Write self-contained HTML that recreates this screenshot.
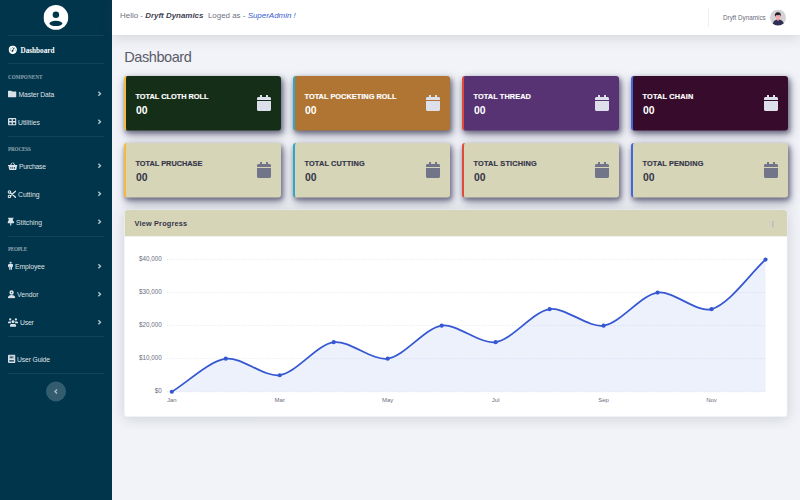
<!DOCTYPE html>
<html lang="en"><head><meta charset="utf-8"><title>Dashboard</title>
<style>
*{box-sizing:border-box}
html,body{margin:0;padding:0;width:800px;height:500px;overflow:hidden;background:#f1f3f8}
body{font-family:"Liberation Sans",sans-serif;color:#858796}
#w{width:1600px;height:1000px;transform:scale(.5);transform-origin:0 0;position:relative;overflow:hidden;background:#f1f3f8;font-size:16px;line-height:1.5}
/* sidebar */
#sb{position:absolute;left:0;top:0;width:224px;height:1000px;background:#00354c}
.brand{height:70px;position:relative}
.brand svg{position:absolute;left:88px;top:11px}
.dv{border-top:1px solid rgba(255,255,255,.15);margin:0 16px 16px 16px}
.dv.m0{margin-bottom:0}
.ni{height:56px;padding:16px;position:relative;color:rgba(255,255,255,.88);font-size:13.600px;line-height:24px;white-space:nowrap}
.ni svg{position:absolute;left:16px;top:19px;fill:#d9e0e6}
.ni span{position:absolute;top:17.400px}
.ni .ar{position:absolute;right:21px;left:auto;top:21px;fill:none;stroke:rgba(255,255,255,.7);stroke-width:2.800}
.ni.act{color:#fff}
.ni.act span{font-family:"Liberation Serif",serif;font-weight:bold;font-size:14.4px}
.hd{padding:0 16px;font-family:"Liberation Serif",serif;font-weight:bold;font-size:10.400px;line-height:15.600px;height:15.600px;color:rgba(255,255,255,.55);position:relative;top:1.600px}
.tg{width:40px;height:40px;border-radius:50%;background:rgba(255,255,255,.2);margin:0 auto;position:relative}
.tg svg{position:absolute;left:14px;top:12px;fill:none;stroke:rgba(255,255,255,.6);stroke-width:2.600}
/* topbar */
#tb{position:absolute;left:224px;top:0;width:1376px;height:70px;background:#fff;box-shadow:0 2.400px 28px 0 rgba(58,59,69,.2)}
.hello{position:absolute;left:16px;top:19px;font-size:15.9px;line-height:24px;color:#70727f;white-space:nowrap}
.hello b{font-style:italic;color:#3f4150}
.hello i{color:#3b5cd0}
.tdv{position:absolute;left:1192px;top:16px;width:0;height:38px;border-right:1.500px solid #d9dce9}
.uname{position:absolute;left:1222px;top:23px;font-size:12.6px;line-height:24px;color:#6a6c7a;white-space:nowrap}
.av{position:absolute;left:1316px;top:19px}
/* content */
h1{position:absolute;left:248.500px;top:96px;margin:0;font-size:29px;line-height:34px;font-weight:normal;color:#5a5c69;letter-spacing:-.85px}
.c{position:absolute;width:314px;height:109px;border-radius:6px;border-left:4px solid #f6c23e;box-shadow:3px 5px 8px rgba(58,55,88,.5),4px 9px 19px rgba(58,55,88,.5)}
.c .t{position:absolute;left:19px;top:28px;font-size:14.700px;line-height:24px;font-weight:bold;white-space:nowrap;-webkit-text-stroke:.35px currentColor}
.c .n{position:absolute;left:20px;top:56px;font-size:20px;line-height:24px;font-weight:bold;transform:scaleX(1.04);transform-origin:0 0}
.c svg{position:absolute;right:20px;top:38px}
.d1{color:#fff}.d1 svg{fill:#dddfeb}
.d2{color:#35364a;background:#d6d5b7}.d2 svg{fill:#72748a}
/* chart card */
#cc{position:absolute;left:248px;top:419px;width:1327px;height:415px;clip-path:inset(-80px -80px -24px -80px);background:#fff;border:1px solid #e3e6f0;border-radius:6px;box-shadow:0 2.4px 28px 0 rgba(58,59,69,.18);overflow:hidden}
#cc .h{height:53px;border-radius:5px 5px 0 0;background:#d6d5b7;border-bottom:1px solid #e3e6f0;position:relative}
#cc .h span{position:absolute;left:20px;top:14px;font-size:14.7px;line-height:24px;font-weight:bold;color:#35364a;letter-spacing:.36px}
#cc .h i{position:absolute;right:27px;top:21.500px;width:3.400px;height:3.400px;background:#b0b1c4;box-shadow:0 4.600px 0 #b0b1c4,0 9.200px 0 #b0b1c4}
.chart{position:absolute;left:0;top:0}
.tk{font-family:"Liberation Sans",sans-serif;font-size:12px;fill:#6b6d7e}.ty{font-size:12.600px}
</style></head><body>
<div id="w">
<div id="sb">
  <div class="brand"><svg width="49.600" height="49.600" viewBox="0 0 49.600 49.600" style="left:87.200px;top:10.300px"><circle cx="24.800" cy="24.800" r="24.800" fill="#fff"/><circle cx="24.800" cy="19.400" r="6.500" fill="#00354c"/><path d="M11.600 36.800Q14.500 31.300 24.800 31.300T38 36.800Q35.100 42.200 24.800 42.200T11.600 36.800z" fill="#00354c"/></svg></div>
  <div class="dv m0"></div>
  <div class="ni act"><svg width="17" height="17" viewBox="0 0 17 17" style="top:19.600px;left:17.400px"><circle cx="8.500" cy="8.500" r="8.300" fill="#fff"/><circle cx="8" cy="10.800" r="1.900" fill="#00354c"/><path d="M8 10.800L10.700 4.800" stroke="#00354c" stroke-width="1.700" stroke-linecap="round"/><circle cx="3.700" cy="9" r=".85" fill="#00354c"/><circle cx="4.900" cy="5.500" r=".85" fill="#00354c"/><circle cx="7.800" cy="3.600" r=".85" fill="#00354c"/><circle cx="13.300" cy="9" r=".85" fill="#00354c"/><circle cx="12.600" cy="5.700" r=".7" fill="#00354c"/></svg><span style="left:41px">Dashboard</span></div>
  <div class="dv"></div>
  <div class="hd">COMPONENT</div>
  <div class="ni"><svg width="17" height="14" viewBox="0 0 17 14" style="top:21px"><path d="M1.6 0h4.6l2 2h7.2c.9 0 1.6.7 1.6 1.6v8.8c0 .9-.7 1.6-1.6 1.6H1.6C.7 14 0 13.300 0 12.400V1.600C0 .7.7 0 1.600 0z"/></svg><span style="left:37px;letter-spacing:-0.24px">Master Data</span><svg class="ar" width="8" height="13" viewBox="0 0 8 13"><path d="M1.700 2.300l4.400 4.200-4.400 4.200"/></svg></div>
  <div class="ni"><svg width="17" height="15" viewBox="0 0 17 15" style="top:20px;left:15.600px"><path fill-rule="evenodd" d="M2.600 0h11.800C15.800 0 17 1.200 17 2.600v9.800c0 1.400-1.200 2.600-2.600 2.600H2.600C1.200 15 0 13.800 0 12.400V2.600C0 1.200 1.200 0 2.600 0zM2.700 2.700v3.500h4.500V2.700zm7.100 0v3.500h4.500V2.700zM2.700 8.800v3.500h4.500V8.800zm7.100 0v3.500h4.500V8.800z"/></svg><span style="left:36px">Utilities</span><svg class="ar" width="8" height="13" viewBox="0 0 8 13"><path d="M1.700 2.300l4.400 4.200-4.400 4.200"/></svg></div>
  <div class="dv"></div>
  <div class="hd" style="letter-spacing:-.35px">PROCESS</div>
  <div class="ni"><svg width="19" height="16" viewBox="0 0 19 16" style="top:20px"><path d="M0 6h19v2h-1l-1.200 7c-.1.600-.600 1-1.200 1H3.400c-.6 0-1.100-.4-1.200-1L1 8H0zM5 10v3.500h1.500V10zm3.800 0v3.500h1.500V10zm3.700 0v3.500H14V10z"/><path d="M4 6.500L8 .8l1.400.9L6 6.500zm11 0L11 .8l-1.400.9 3.400 4.800z"/></svg><span style="left:38px;letter-spacing:-0.5px">Purchase</span><svg class="ar" width="8" height="13" viewBox="0 0 8 13"><path d="M1.700 2.300l4.400 4.200-4.400 4.200"/></svg></div>
  <div class="ni"><svg width="17" height="17" viewBox="0 0 17 17" style="top:19.600px;left:15.400px"><g fill="none" stroke="#dfe5ea" stroke-width="2.300"><circle cx="3.800" cy="4" r="2.500"/><circle cx="3.800" cy="13" r="2.500"/><path d="M5.800 5.600L16 14.600M5.800 11.400L16 2.400" stroke-width="2.700" stroke-linecap="round"/></g></svg><span style="left:36px">Cutting</span><svg class="ar" width="8" height="13" viewBox="0 0 8 13"><path d="M1.700 2.300l4.400 4.200-4.400 4.200"/></svg></div>
  <div class="ni"><svg width="13" height="17" viewBox="0 0 13 17" style="top:19px;left:15.400px"><path d="M1.600 0h9.800c.5 0 .9.400.9.900v.6c0 .5-.4.900-.9.900h-.9l.5 4c1.500.9 2.200 2.400 2.200 4.200 0 .5-.4.900-.9.900H7.600v3.600L6.500 17l-1.100-1.900v-3.600H.7c-.5 0-.9-.4-.9-.9 0-1.800.7-3.300 2.200-4.200l.5-4h-.9c-.5 0-.9-.4-.9-.9V.9c0-.5.400-.9.900-.9z"/></svg><span style="left:32px">Stitching</span><svg class="ar" width="8" height="13" viewBox="0 0 8 13"><path d="M1.700 2.300l4.400 4.200-4.400 4.200"/></svg></div>
  <div class="dv"></div>
  <div class="hd" style="letter-spacing:-.67px">PEOPLE</div>
  <div class="ni"><svg width="10.400" height="16.400" viewBox="0 0 10 16" preserveAspectRatio="none" style="top:18.600px;left:15.600px"><circle cx="5" cy="1.900" r="1.900"/><path d="M3.200 4.300h3.600C8.600 4.300 10 5.700 10 7.500v2.700c0 .5-.4.900-.9.900H8.200V8.600h-.5V16H5.400v-5.200h-.8V16H2.300V8.600h-.5v2.500H.9c-.5 0-.9-.4-.9-.9V7.500c0-1.800 1.400-3.200 3.200-3.200z"/></svg><span style="left:30px;letter-spacing:-0.15px">Employee</span><svg class="ar" width="8" height="13" viewBox="0 0 8 13"><path d="M1.700 2.300l4.400 4.200-4.400 4.200"/></svg></div>
  <div class="ni"><svg width="15" height="17" viewBox="0 0 15 17" style="top:19px;left:15.600px"><path fill-rule="evenodd" d="M7.200.6a4.400 4.400 0 1 0 0 8.800a4.400 4.400 0 1 0 0-8.800zM7.200 3.800a1.100 1.100 0 1 1 0 2.200a1.100 1.100 0 1 1 0-2.200z"/><path d="M0 16.400c0-.9 0-1.500.2-2.300.6-2.600 3.400-4 7-4s6.400 1.400 7 4c.2.800.2 1.400.2 2.300z"/></svg><span style="left:34px">Vendor</span><svg class="ar" width="8" height="13" viewBox="0 0 8 13"><path d="M1.700 2.300l4.400 4.200-4.400 4.200"/></svg></div>
  <div class="ni"><svg width="20" height="18" viewBox="0 0 20 18" style="top:19.200px;left:15.600px"><circle cx="4.400" cy="2.800" r="2.300"/><circle cx="15.800" cy="2.800" r="2.300"/><path d="M2 7.200h3.600c.5 0 .9.100 1.300.3-.9.900-1.200 2-1 3.100H.8c-.4 0-.8-.4-.8-.8V9.200c0-1.100.9-2 2-2zm12.600 0h3.600c1.100 0 2 .9 2 2v.6c0 .4-.4.800-.8.800h-5.100c.2-1.100-.1-2.200-1-3.100.4-.2.800-.3 1.300-.3z"/><circle cx="10.100" cy="7.600" r="2.900"/><path d="M7.200 12h5.800c1.800 0 3.200 1.400 3.200 3.200v1.200c0 .7-.6 1.300-1.300 1.300H5.300c-.7 0-1.300-.6-1.300-1.300v-1.200C4 13.400 5.400 12 7.200 12z"/></svg><span style="left:40px;letter-spacing:-0.4px">User</span><svg class="ar" width="8" height="13" viewBox="0 0 8 13"><path d="M1.700 2.300l4.400 4.200-4.400 4.200"/></svg></div>
  <div class="dv"></div>
  <div class="ni"><svg width="15" height="17" viewBox="0 0 15 17" style="top:19.600px;left:15.600px"><path fill-rule="evenodd" d="M2.600 0h9.800C13.800 0 15 1.200 15 2.600v11.800c0 1.400-1.200 2.600-2.600 2.600H2.600C1.200 17 0 15.800 0 14.400V2.600C0 1.200 1.200 0 2.600 0zM4.200 4.600v1.800h5.200V4.600zM2.600 11.400v2.800h9.200v-2.800z"/><rect x="2.200" y="2.200" width="10.600" height="6.400" fill="#00354c" opacity=".22"/></svg><span style="left:34px;letter-spacing:-0.3px">User Guide</span></div>
  <div class="dv"></div>
  <div class="tg"><svg width="12" height="16" viewBox="0 0 12 16"><path d="M8 4L4 8l4 4"/></svg></div>
</div>
<div id="tb">
  <div class="hello">Hello - <b>Dryft Dynamics</b>&nbsp; Loged as - <i>SuperAdmin !</i></div>
  <div class="tdv"></div>
  <div class="uname">Dryft Dynamics</div>
  <svg class="av" width="32" height="32" viewBox="0 0 32 32"><defs><clipPath id="cp"><circle cx="16" cy="16" r="16"/></clipPath></defs><g clip-path="url(#cp)"><rect width="32" height="32" fill="#d3d3d5"/><path d="M5 33c0-8 4-13 11.300-13S28.500 25 28.500 33z" fill="#2f2e55"/><path d="M13.300 16h5.400v5.200c-1.500 1.600-3.900 1.600-5.400 0z" fill="#f79aa2"/><ellipse cx="15.900" cy="14.200" rx="4.100" ry="5.200" fill="#fba6ac"/><path d="M10.200 13.800c-1.600-4.800 1.300-8.300 5.800-8.300 4 0 6 2.600 5.500 6.200-.2 1.200-.6 2-1.200 2.600.1-1.600-.3-2.800-1.300-3.600-2.200.9-4.800.8-6.700.2-.7.700-1.200 1.700-1.300 3.200z" fill="#1f2029"/></g></svg>
</div>
<h1>Dashboard</h1>
<div class="c d1" style="left:248px;top:152px;background:#152e18;border-left-color:#f6b93b"><div class="t">TOTAL CLOTH ROLL</div><div class="n">00</div><svg width="28" height="32" viewBox="0 0 448 512"><path d="M12 192h424c6.600 0 12 5.400 12 12v260c0 26.500-21.500 48-48 48H48c-26.500 0-48-21.500-48-48V204c0-6.600 5.400-12 12-12zm436-44v-36c0-26.500-21.500-48-48-48h-48V12c0-6.600-5.400-12-12-12h-40c-6.600 0-12 5.400-12 12v52H160V12c0-6.600-5.400-12-12-12h-40c-6.600 0-12 5.400-12 12v52H48C21.500 64 0 85.500 0 112v36c0 6.600 5.400 12 12 12h424c6.600 0 12-5.400 12-12z"/></svg></div>
<div class="c d1" style="left:586px;top:152px;background:#b07433;border-left-color:#2fa8c4"><div class="t" style="letter-spacing:0.07px">TOTAL POCKETING ROLL</div><div class="n">00</div><svg width="28" height="32" viewBox="0 0 448 512"><path d="M12 192h424c6.600 0 12 5.400 12 12v260c0 26.500-21.500 48-48 48H48c-26.500 0-48-21.500-48-48V204c0-6.600 5.400-12 12-12zm436-44v-36c0-26.500-21.500-48-48-48h-48V12c0-6.600-5.400-12-12-12h-40c-6.600 0-12 5.400-12 12v52H160V12c0-6.600-5.400-12-12-12h-40c-6.600 0-12 5.400-12 12v52H48C21.500 64 0 85.500 0 112v36c0 6.600 5.400 12 12 12h424c6.600 0 12-5.400 12-12z"/></svg></div>
<div class="c d1" style="left:924px;top:152px;background:#573373;border-left-color:#e04a3a"><div class="t" style="letter-spacing:0.2px">TOTAL THREAD</div><div class="n">00</div><svg width="28" height="32" viewBox="0 0 448 512"><path d="M12 192h424c6.600 0 12 5.400 12 12v260c0 26.500-21.500 48-48 48H48c-26.500 0-48-21.500-48-48V204c0-6.600 5.400-12 12-12zm436-44v-36c0-26.500-21.500-48-48-48h-48V12c0-6.600-5.400-12-12-12h-40c-6.600 0-12 5.400-12 12v52H160V12c0-6.600-5.400-12-12-12h-40c-6.600 0-12 5.400-12 12v52H48C21.500 64 0 85.500 0 112v36c0 6.600 5.400 12 12 12h424c6.600 0 12-5.400 12-12z"/></svg></div>
<div class="c d1" style="left:1262px;top:152px;background:#360b2b;border-left-color:#4466d8"><div class="t" style="letter-spacing:0.35px">TOTAL CHAIN</div><div class="n">00</div><svg width="28" height="32" viewBox="0 0 448 512"><path d="M12 192h424c6.600 0 12 5.400 12 12v260c0 26.500-21.500 48-48 48H48c-26.500 0-48-21.500-48-48V204c0-6.600 5.400-12 12-12zm436-44v-36c0-26.500-21.500-48-48-48h-48V12c0-6.600-5.400-12-12-12h-40c-6.600 0-12 5.400-12 12v52H160V12c0-6.600-5.400-12-12-12h-40c-6.600 0-12 5.400-12 12v52H48C21.500 64 0 85.500 0 112v36c0 6.600 5.400 12 12 12h424c6.600 0 12-5.400 12-12z"/></svg></div>
<div class="c d2" style="left:248px;top:286px;border-left-color:#f6b93b"><div class="t">TOTAL PRUCHASE</div><div class="n">00</div><svg width="28" height="32" viewBox="0 0 448 512"><path d="M12 192h424c6.600 0 12 5.400 12 12v260c0 26.500-21.500 48-48 48H48c-26.500 0-48-21.500-48-48V204c0-6.600 5.400-12 12-12zm436-44v-36c0-26.500-21.500-48-48-48h-48V12c0-6.600-5.400-12-12-12h-40c-6.600 0-12 5.400-12 12v52H160V12c0-6.600-5.400-12-12-12h-40c-6.600 0-12 5.400-12 12v52H48C21.500 64 0 85.500 0 112v36c0 6.600 5.400 12 12 12h424c6.600 0 12-5.400 12-12z"/></svg></div>
<div class="c d2" style="left:586px;top:286px;border-left-color:#2fa8c4"><div class="t" style="letter-spacing:0.3px">TOTAL CUTTING</div><div class="n">00</div><svg width="28" height="32" viewBox="0 0 448 512"><path d="M12 192h424c6.600 0 12 5.400 12 12v260c0 26.500-21.500 48-48 48H48c-26.500 0-48-21.500-48-48V204c0-6.600 5.400-12 12-12zm436-44v-36c0-26.500-21.500-48-48-48h-48V12c0-6.600-5.400-12-12-12h-40c-6.600 0-12 5.400-12 12v52H160V12c0-6.600-5.400-12-12-12h-40c-6.600 0-12 5.400-12 12v52H48C21.500 64 0 85.500 0 112v36c0 6.600 5.400 12 12 12h424c6.600 0 12-5.400 12-12z"/></svg></div>
<div class="c d2" style="left:924px;top:286px;border-left-color:#e04a3a"><div class="t" style="letter-spacing:0.37px">TOTAL STICHING</div><div class="n">00</div><svg width="28" height="32" viewBox="0 0 448 512"><path d="M12 192h424c6.600 0 12 5.400 12 12v260c0 26.500-21.500 48-48 48H48c-26.500 0-48-21.500-48-48V204c0-6.600 5.400-12 12-12zm436-44v-36c0-26.500-21.500-48-48-48h-48V12c0-6.600-5.400-12-12-12h-40c-6.600 0-12 5.400-12 12v52H160V12c0-6.600-5.400-12-12-12h-40c-6.600 0-12 5.400-12 12v52H48C21.500 64 0 85.500 0 112v36c0 6.600 5.400 12 12 12h424c6.600 0 12-5.400 12-12z"/></svg></div>
<div class="c d2" style="left:1262px;top:286px;border-left-color:#4466d8"><div class="t" style="letter-spacing:0.28px">TOTAL PENDING</div><div class="n">00</div><svg width="28" height="32" viewBox="0 0 448 512"><path d="M12 192h424c6.600 0 12 5.400 12 12v260c0 26.500-21.500 48-48 48H48c-26.500 0-48-21.500-48-48V204c0-6.600 5.400-12 12-12zm436-44v-36c0-26.500-21.500-48-48-48h-48V12c0-6.600-5.400-12-12-12h-40c-6.600 0-12 5.400-12 12v52H160V12c0-6.600-5.400-12-12-12h-40c-6.600 0-12 5.400-12 12v52H48C21.500 64 0 85.500 0 112v36c0 6.600 5.400 12 12 12h424c6.600 0 12-5.400 12-12z"/></svg></div>
<div id="cc"><div class="h"><span>View Progress</span><i></i></div></div>
<svg class="chart" width="1600" height="1000" viewBox="0 0 1600 1000"><line x1="333.6" y1="783.5" x2="1531.1" y2="783.5" stroke="#eaecf4" stroke-width="2" stroke-dasharray="3 3"/><line x1="333.6" y1="717.4" x2="1531.1" y2="717.4" stroke="#eaecf4" stroke-width="2" stroke-dasharray="3 3"/><line x1="333.6" y1="651.3" x2="1531.1" y2="651.3" stroke="#eaecf4" stroke-width="2" stroke-dasharray="3 3"/><line x1="333.6" y1="585.2" x2="1531.1" y2="585.2" stroke="#eaecf4" stroke-width="2" stroke-dasharray="3 3"/><line x1="333.6" y1="519.1" x2="1531.1" y2="519.1" stroke="#eaecf4" stroke-width="2" stroke-dasharray="3 3"/><path d="M343.60 783.50 C375.99 763.67 417.31 722.64 451.55 717.40 C482.08 712.73 528.97 755.12 559.50 750.45 C593.74 745.21 633.21 689.59 667.45 684.35 C697.98 679.68 744.87 722.07 775.40 717.40 C809.64 712.16 849.11 656.54 883.35 651.30 C913.88 646.63 960.77 689.02 991.30 684.35 C1025.54 679.11 1065.01 623.49 1099.25 618.25 C1129.78 613.58 1176.67 655.97 1207.20 651.30 C1241.44 646.06 1280.91 590.44 1315.15 585.20 C1345.68 580.53 1394.92 626.88 1423.10 618.25 C1459.69 607.05 1498.67 548.85 1531.05 519.10 L1531.05 783.50 L343.60 783.50 Z" fill="rgba(78,115,223,0.10)"/><path d="M343.60 783.50 C375.99 763.67 417.31 722.64 451.55 717.40 C482.08 712.73 528.97 755.12 559.50 750.45 C593.74 745.21 633.21 689.59 667.45 684.35 C697.98 679.68 744.87 722.07 775.40 717.40 C809.64 712.16 849.11 656.54 883.35 651.30 C913.88 646.63 960.77 689.02 991.30 684.35 C1025.54 679.11 1065.01 623.49 1099.25 618.25 C1129.78 613.58 1176.67 655.97 1207.20 651.30 C1241.44 646.06 1280.91 590.44 1315.15 585.20 C1345.68 580.53 1394.92 626.88 1423.10 618.25 C1459.69 607.05 1498.67 548.85 1531.05 519.10" fill="none" stroke="#3558d2" stroke-width="3.5" stroke-linejoin="round" stroke-linecap="round"/><circle cx="343.60" cy="783.50" r="4.2" fill="#3558d2"/><circle cx="451.55" cy="717.40" r="4.2" fill="#3558d2"/><circle cx="559.50" cy="750.45" r="4.2" fill="#3558d2"/><circle cx="667.45" cy="684.35" r="4.2" fill="#3558d2"/><circle cx="775.40" cy="717.40" r="4.2" fill="#3558d2"/><circle cx="883.35" cy="651.30" r="4.2" fill="#3558d2"/><circle cx="991.30" cy="684.35" r="4.2" fill="#3558d2"/><circle cx="1099.25" cy="618.25" r="4.2" fill="#3558d2"/><circle cx="1207.20" cy="651.30" r="4.2" fill="#3558d2"/><circle cx="1315.15" cy="585.20" r="4.2" fill="#3558d2"/><circle cx="1423.10" cy="618.25" r="4.2" fill="#3558d2"/><circle cx="1531.05" cy="519.10" r="4.2" fill="#3558d2"/><text x="323.6" y="786.9" text-anchor="end" class="tk ty">$0</text><text x="323.6" y="720.8" text-anchor="end" class="tk ty">$10,000</text><text x="323.6" y="654.7" text-anchor="end" class="tk ty">$20,000</text><text x="323.6" y="588.6" text-anchor="end" class="tk ty">$30,000</text><text x="323.6" y="522.5" text-anchor="end" class="tk ty">$40,000</text><text x="343.6" y="803.5" text-anchor="middle" class="tk">Jan</text><text x="559.5" y="803.5" text-anchor="middle" class="tk">Mar</text><text x="775.4" y="803.5" text-anchor="middle" class="tk">May</text><text x="991.3" y="803.5" text-anchor="middle" class="tk">Jul</text><text x="1207.2" y="803.5" text-anchor="middle" class="tk">Sep</text><text x="1423.1" y="803.5" text-anchor="middle" class="tk">Nov</text></svg>
</div>
</body></html>
